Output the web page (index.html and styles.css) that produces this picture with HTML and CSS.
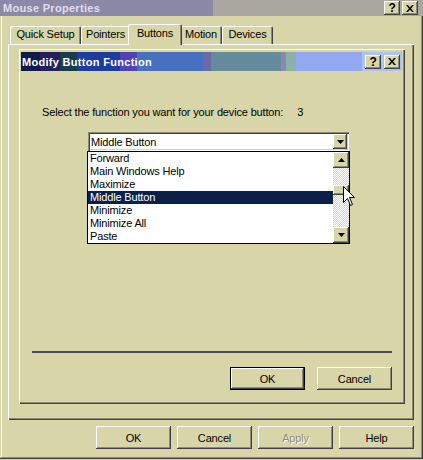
FILE: index.html
```html
<!DOCTYPE html>
<html lang="en">
<head>
  <meta charset="UTF-8">
  <title>Mouse Properties</title>
  <link rel="stylesheet" href="styles.css">
</head>
<body>

  <div class="window">
    <div class="titlebar">
      <span class="title">Mouse Properties</span>
      <div class="cap-buttons">
        <button class="cap-button">?</button>
        <button class="cap-button">
          <svg width="8" height="7" viewBox="0 0 8 7"><path d="M0 0h2l2 2.5L6 0h2L5 3.5 8 7H6L4 4.5 2 7H0l3-3.5z" fill="#000"/></svg>
        </button>
      </div>
    </div>

    <div class="tabs">
      <div class="tab tab-quick">Quick Setup</div>
      <div class="tab tab-pointers">Pointers</div>
      <div class="tab tab-buttons selected">Buttons</div>
      <div class="tab tab-motion">Motion</div>
      <div class="tab tab-devices">Devices</div>
    </div>

    <div class="panel">
      <div class="dialog">
        <div class="dialog-title">
          <span class="title">Modify Button Function</span>
          <div class="cap-buttons">
            <button class="cap-button">?</button>
            <button class="cap-button">
              <svg width="8" height="7" viewBox="0 0 8 7"><path d="M0 0h2l2 2.5L6 0h2L5 3.5 8 7H6L4 4.5 2 7H0l3-3.5z" fill="#000"/></svg>
            </button>
          </div>
        </div>

        <p class="prompt">Select the function you want for your device button:<span class="button-number">3</span></p>

        <div class="combo">
          <span class="combo-value">Middle Button</span>
          <div class="drop-button">
            <svg width="7" height="4" viewBox="0 0 7 4"><path d="M0 0h7L3.5 4z" fill="#000"/></svg>
          </div>
        </div>

        <div class="list">
          <ul class="items">
            <li>Forward</li>
            <li>Main Windows Help</li>
            <li>Maximize</li>
            <li class="selected">Middle Button</li>
            <li>Minimize</li>
            <li>Minimize All</li>
            <li>Paste</li>
          </ul>
          <div class="scrollbar">
            <div class="scroll-button">
              <svg width="7" height="4" viewBox="0 0 7 4"><path d="M3.5 0L7 4H0z" fill="#000"/></svg>
            </div>
            <div class="track"><div class="thumb"></div></div>
            <div class="scroll-button">
              <svg width="7" height="4" viewBox="0 0 7 4"><path d="M0 0h7L3.5 4z" fill="#000"/></svg>
            </div>
          </div>
          <!-- mouse pointer over the scrollbar -->
          <svg class="cursor" width="13" height="21" viewBox="0 0 13 21">
            <path d="M0.5 0.5V16.5L4.5 12.5L7.5 19.5L9.5 18.5L6.5 11.5H11.5Z" fill="#fff" stroke="#000" stroke-linejoin="miter"/>
          </svg>
        </div>

        <div class="separator"></div>

        <div class="dialog-actions">
          <button class="push default">OK</button>
          <button class="push">Cancel</button>
        </div>
      </div>
    </div>

    <div class="actions">
      <button class="push">OK</button>
      <button class="push">Cancel</button>
      <button class="push" disabled>Apply</button>
      <button class="push">Help</button>
    </div>
  </div>

</body>
</html>
```

FILE: styles.css
```css
/* Classic Windows look, olive scheme */
* {
  margin: 0;
  padding: 0;
  box-sizing: border-box;
}

body {
  font-family: "Liberation Sans", Arial, sans-serif;
  font-size: 11px;
  letter-spacing: -0.16px;
  color: #000;
  background: #d8d6a9;
  width: 423px;
  height: 460px;
  overflow: hidden;
}

button {
  font-family: inherit;
  font-size: 11px;
  letter-spacing: inherit;
  color: #000;
  border: none;
  background: #d8d6a9;
}

.window {
  width: 423px;
  height: 459px;
  display: flex;
  flex-direction: column;
  box-shadow: inset -1px -1px #404048, inset 1px 1px #d8d6a9, inset -2px -2px #8c8b74, inset 2px 2px #fff;
}

/* Caption bars */
.titlebar {
  height: 16px;
  display: flex;
  align-items: center;
  justify-content: space-between;
  padding: 0 5px 0 3px;
  background: linear-gradient(to right, #8c88a8 0, #8c88a8 213px, #a9a79f 213px);
}

.title {
  font-weight: bold;
  letter-spacing: 0.3px;
  color: #e2def2;
  line-height: 14px;
}

.cap-buttons {
  display: flex;
  gap: 2px;
}

.cap-button {
  width: 16px;
  height: 14px;
  display: flex;
  align-items: center;
  justify-content: center;
  font-weight: bold;
  font-size: 12px;
  line-height: 12px;
  box-shadow: inset -1px -1px #404048, inset 1px 1px #fff, inset -2px -2px #8c8b74;
}

/* Tabs */
.tabs {
  display: flex;
  align-items: flex-end;
  height: 20px;
  margin-top: 8px;
  padding-left: 10px;
}

.tab {
  height: 18px;
  line-height: 17px;
  text-align: center;
  border-radius: 2px 2px 0 0;
  box-shadow: inset 1px 1px #fff, inset -1px 0 #404048, inset -2px 0 #8c8b74;
}

.tab-quick { width: 71px; }
.tab-pointers { width: 49px; }
.tab-motion { width: 42px; }
.tab-devices { width: 51px; }

.tab-buttons {
  width: 54px;
  margin: 0 -2px -1px;
}

.tab.selected {
  height: 21px;
  line-height: 18px;
  position: relative;
  z-index: 1;
  background: #d8d6a9;
}

/* Tab page */
.panel {
  height: 376px;
  margin: 0 9px 0 8px;
  padding: 4px 9px 0 10px;
  box-shadow: inset 1px 1px #fff, inset -1px -1px #404048, inset -2px -2px #8c8b74;
}

.dialog {
  height: 356px;
  display: flex;
  flex-direction: column;
  padding: 4px 3px 3px;
  box-shadow: inset 1px 1px #d8d6a9, inset 2px 2px #fff, inset -1px -1px #404048, inset -2px -2px #8c8b74;
}

.dialog-title {
  height: 19px;
  display: flex;
  align-items: center;
  justify-content: space-between;
  padding: 0 2px 0 1px;
  background: linear-gradient(to right,
    #0c1a4e 0, #0c1a4e 19px,
    #24205e 19px, #24205e 39px,
    #183e4e 39px, #183e4e 56px,
    #1c3ca4 56px, #1c3ca4 99px,
    #5044b4 99px, #5044b4 116px,
    #4670c0 116px, #4670c0 182px,
    #6a6aa8 182px, #6a6aa8 190px,
    #648c9c 190px, #648c9c 260px,
    #8c88b4 260px, #8c88b4 265px,
    #8ab0a8 265px, #8ab0a8 275px,
    #92a8f0 275px, #92a8f0 341px,
    #a8c4f4 341px);
}

.dialog-title .title {
  color: #fff;
}

.dialog-title .cap-buttons {
  gap: 3px;
}

.prompt {
  margin: 35px 0 0 21px;
  line-height: 13px;
}

.button-number {
  margin-left: 14px;
}

/* Combo box and its open list */
.combo {
  width: 261px;
  height: 19px;
  margin: 13px 0 0 67px;
  display: flex;
  align-items: center;
  justify-content: space-between;
  padding: 2px;
  background: #fff;
  box-shadow: inset 1px 1px #8c8b74, inset 2px 2px #404048, inset -1px -1px #fff, inset -2px -2px #d8d6a9;
}

.combo-value {
  padding-left: 1px;
}

.drop-button {
  width: 14px;
  height: 15px;
  display: flex;
  align-items: center;
  justify-content: center;
  background: #d8d6a9;
  box-shadow: inset -1px -1px #404048, inset 1px 1px #fff, inset -2px -2px #8c8b74;
}

.list {
  position: relative;
  width: 263px;
  height: 93px;
  margin-left: 66px;
  display: flex;
  border: 1px solid #000;
  background: #fff;
}

.items {
  flex: 1;
  list-style: none;
}

.items li {
  height: 13px;
  line-height: 13px;
  padding-left: 2px;
}

.items li.selected {
  background: #0a2048;
  color: #fff;
}

.scrollbar {
  width: 16px;
  display: flex;
  flex-direction: column;
}

.scroll-button {
  height: 16px;
  display: flex;
  align-items: center;
  justify-content: center;
  background: #d8d6a9;
  box-shadow: inset -1px -1px #404048, inset 1px 1px #fff, inset -2px -2px #8c8b74;
}

.track {
  flex: 1;
  background: repeating-conic-gradient(#fff 0 25%, #d8d6a9 0 50%) 0 0 / 2px 2px;
}

.thumb {
  height: 10px;
  margin-top: 17px;
  background: #d8d6a9;
  box-shadow: inset -1px -1px #404048, inset 1px 1px #fff, inset -2px -2px #8c8b74;
}

.cursor {
  position: absolute;
  left: 255px;
  top: 34px;
}

.separator {
  width: 360px;
  height: 2px;
  margin: 107px 0 0 11px;
  background: #505058;
}

/* Push buttons */
.dialog-actions {
  display: flex;
  justify-content: flex-end;
  gap: 12px;
  margin-top: 14px;
  padding-right: 10px;
}

.push {
  width: 75px;
  height: 23px;
  box-shadow: inset -1px -1px #404048, inset 1px 1px #fff, inset -2px -2px #8c8b74;
}

.push.default {
  box-shadow: inset 0 0 0 1px #000, inset -2px -2px #404048, inset 2px 2px #fff, inset -3px -3px #8c8b74;
}

.push:disabled {
  color: #8c8b74;
  text-shadow: 1px 1px #fff;
}

.actions {
  display: flex;
  justify-content: flex-end;
  gap: 6px;
  margin-top: 6px;
  padding-right: 9px;
}
```
